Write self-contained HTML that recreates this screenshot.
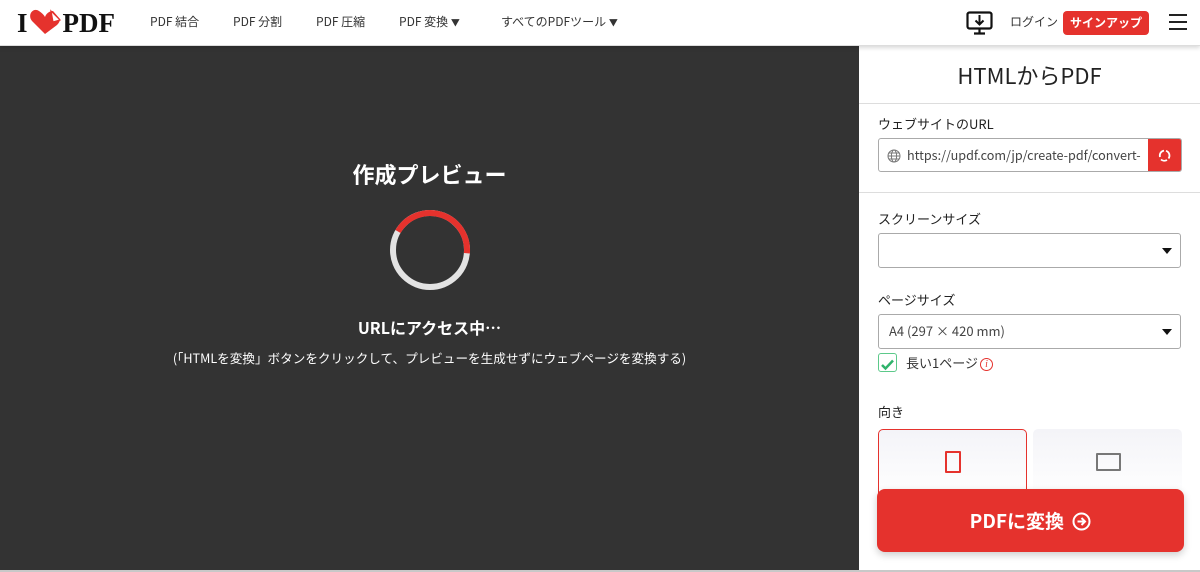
<!DOCTYPE html>
<html><head><meta charset="utf-8"><style>
*{box-sizing:border-box;margin:0;padding:0}
body{width:1200px;height:572px;overflow:hidden;background:#fff;font-family:"Noto Sans CJK JP","Liberation Sans",sans-serif;position:relative}
.hdr{position:absolute;left:0;top:0;width:1200px;height:46px;background:#fff;border-bottom:1px solid #ddd;box-shadow:0 2px 4px rgba(0,0,0,.15);z-index:5}
.logo{position:absolute;left:17px;top:9px;font-family:"Liberation Serif",serif;font-weight:bold;font-size:27px;color:#111;line-height:28px}
.nav{position:absolute;top:13px;font-size:12px;color:#333;line-height:18px}
.dark{position:absolute;left:0;top:46px;width:859px;height:524px;background:#333}
.t1{position:absolute;left:0;width:859px;text-align:center;color:#fff;line-height:1.3}
.panel{position:absolute;left:859px;top:46px;width:341px;height:524px;background:#fff}
.lbl{position:absolute;left:19px;font-size:13px;color:#222;line-height:18px}
.sel{position:absolute;left:19px;width:303px;height:35px;border:1px solid #aaa;border-radius:3px;font-size:13px;color:#444}
.tri{position:absolute;right:8px;top:14px;width:0;height:0;border-left:5px solid transparent;border-right:5px solid transparent;border-top:6px solid #111}
.hl{position:absolute;left:0;width:341px;height:1px;background:#ddd}
</style></head><body>
<div class="hdr">
 <div class="logo">I<svg width="33" height="26" viewBox="0 0 33 26" style="vertical-align:-3px;margin:0 1px"><path d="M16 25 L3 12 C-2 6 4 -2 10 2 C13 4 15 6 16 8 C17 5 20 2 24 2 L31 10 C31 12 30 14 28 16 Z" fill="#e5322d"/><path d="M22 2 L31 11 L24 13 Z" fill="#fff" stroke="#e5322d" stroke-width="1.2"/></svg>PDF</div>
 <div class="nav" style="left:150px">PDF 結合</div>
 <div class="nav" style="left:233px">PDF 分割</div>
 <div class="nav" style="left:316px">PDF 圧縮</div>
 <div class="nav" style="left:399px">PDF 変換 <span style="font-size:9px">▼</span></div>
 <div class="nav" style="left:501px">すべてのPDFツール <span style="font-size:9px">▼</span></div>
 <svg style="position:absolute;left:966px;top:11px" width="27" height="24" viewBox="0 0 27 24"><rect x="1.5" y="1.5" width="24" height="16" rx="2" fill="none" stroke="#111" stroke-width="2.2"/><path d="M13.5 4v9M9.5 9.5l4 4 4-4" fill="none" stroke="#111" stroke-width="2"/><path d="M13.5 18v4M8 22.5h11" stroke="#111" stroke-width="2.2"/></svg>
 <div class="nav" style="left:1010px">ログイン</div>
 <div style="position:absolute;left:1063px;top:11px;width:86px;height:24px;background:#e5322d;border-radius:4px;color:#fff;font-size:12px;font-weight:bold;text-align:center;line-height:24px">サインアップ</div>
 <div style="position:absolute;left:1169px;top:14px;width:18px;height:2px;background:#222;box-shadow:0 7px 0 #222,0 14px 0 #222"></div>
</div>
<div class="dark">
 <div class="t1" style="top:114px;font-size:22px;font-weight:bold">作成プレビュー</div>
 <svg style="position:absolute;left:388px;top:162px" width="84" height="84" viewBox="0 0 84 84"><circle cx="42" cy="42" r="37" fill="none" stroke="#e3e3e3" stroke-width="6"/><path d="M10 23.5 A37 37 0 0 1 78.9 45.2" fill="none" stroke="#e5322d" stroke-width="6"/></svg>
 <div class="t1" style="top:271px;font-size:16px;font-weight:bold">URLにアクセス中…</div>
 <div class="t1" style="top:304px;font-size:12.6px">(「HTMLを変換」ボタンをクリックして、プレビューを生成せずにウェブページを変換する)</div>
</div>
<div class="panel">
 <div style="position:absolute;left:0;top:13px;width:341px;text-align:center;font-size:22px;color:#222;line-height:32px">HTMLからPDF</div>
 <div class="hl" style="top:57px"></div>
 <div class="lbl" style="top:69px">ウェブサイトのURL</div>
 <div style="position:absolute;left:19px;top:92px;width:304px;height:34px;border:1px solid #aaa;border-radius:3px;overflow:hidden">
  <svg style="position:absolute;left:8px;top:10px" width="14" height="14" viewBox="0 0 14 14" fill="none" stroke="#777" stroke-width="1"><circle cx="7" cy="7" r="6"/><ellipse cx="7" cy="7" rx="2.6" ry="6"/><path d="M1 7h12M2 4h10M2 10h10"/></svg>
  <div style="position:absolute;left:28px;top:7px;font-size:12.6px;color:#444;white-space:nowrap;line-height:18px">https://updf.com/jp/create-pdf/convert-</div>
  <div style="position:absolute;right:0;top:0;width:33px;height:34px;background:#e5322d"><svg style="position:absolute;left:10px;top:10px" width="13" height="13" viewBox="0 0 13 13" fill="none" stroke="#fff" stroke-width="1.8"><path d="M2 8A5 5 0 0 1 6 1.6M8 1.8A5 5 0 0 1 10.5 9.5M9 11A5 5 0 0 1 3 10.5"/></svg></div>
 </div>
 <div class="hl" style="top:146px"></div>
 <div class="lbl" style="top:164px">スクリーンサイズ</div>
 <div class="sel" style="top:187px"><div class="tri"></div></div>
 <div class="lbl" style="top:245px">ページサイズ</div>
 <div class="sel" style="top:268px"><span style="position:absolute;left:10px;top:7px;line-height:18px">A4 (297 × 420 mm)</span><div class="tri"></div></div>
 <div style="position:absolute;left:19px;top:307px;width:19px;height:19px;border:1px solid #5cc98a;border-radius:3px"><svg width="17" height="17" viewBox="0 0 17 17"><path d="M3 9l3.5 3.5L14 4.5" fill="none" stroke="#2fb36b" stroke-width="2.5"/></svg></div>
 <div class="lbl" style="left:47px;top:308px;color:#333">長い1ページ<span style="color:#e5322d;font-style:italic;font-family:'Liberation Serif',serif;display:inline-block;width:13px;height:13px;border:1px solid #e5322d;border-radius:50%;font-size:10px;text-align:center;line-height:12px;margin-left:2px;vertical-align:1px">i</span></div>
 <div class="lbl" style="top:357px">向き</div>
 <div style="position:absolute;left:19px;top:383px;width:149px;height:70px;border:1px solid #e5322d;border-bottom:none;border-radius:5px 5px 0 0;background:linear-gradient(#f4f4f8,#fff)"><div style="position:absolute;left:66px;top:21px;width:16px;height:22px;border:2px solid #e5322d;border-radius:1px"></div></div>
 <div style="position:absolute;left:174px;top:383px;width:149px;height:70px;border-radius:5px 5px 0 0;background:linear-gradient(#f4f4f8,#fff)"><div style="position:absolute;left:63px;top:24px;width:25px;height:18px;border:2px solid #777;border-radius:1px"></div></div>
 <div style="position:absolute;left:18px;top:443px;width:307px;height:63px;background:#e5322d;border-radius:8px;box-shadow:0 3px 8px rgba(0,0,0,.2);color:#fff;font-size:19px;font-weight:bold;text-align:center;line-height:63px">PDFに変換 <svg width="19" height="19" viewBox="0 0 19 19" style="vertical-align:-3px;margin-left:4px"><circle cx="9.5" cy="9.5" r="8" fill="none" stroke="#fff" stroke-width="2"/><path d="M5.5 9.5h7M9.5 6l3.5 3.5-3.5 3.5" fill="none" stroke="#fff" stroke-width="2"/></svg></div>
</div>
<div style="position:absolute;left:0;top:570px;width:1200px;height:2px;background:#c8c8c8"></div>
</body></html>
